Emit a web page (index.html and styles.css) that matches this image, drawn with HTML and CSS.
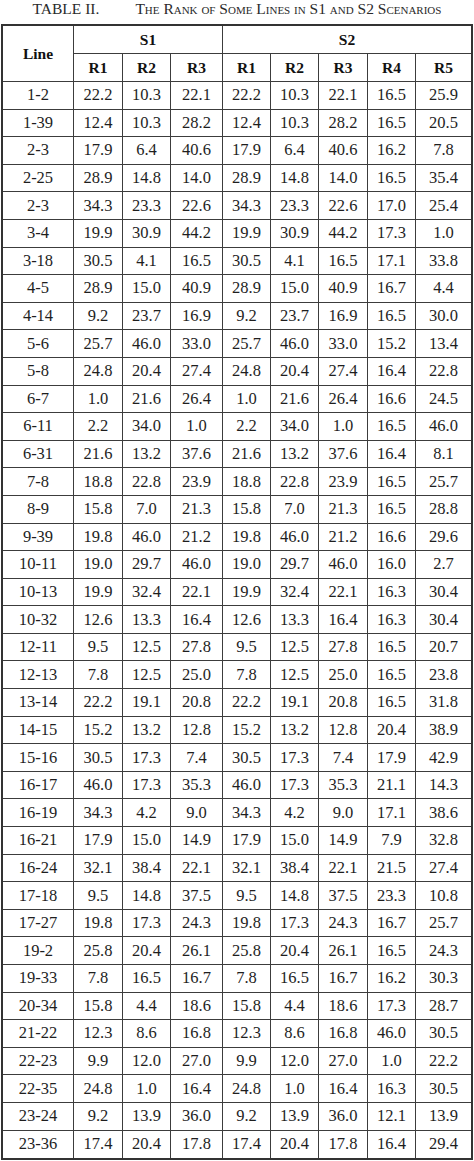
FILE: index.html
```html
<!DOCTYPE html>
<html>
<head>
<meta charset="utf-8">
<link rel="stylesheet" href="styles.css">
</head>
<body>
<div class="title"><span class="label">TABLE II.</span><span class="name">The Rank of Some Lines in S1 and S2 Scenarios</span></div>
<table class="rank">
<colgroup>
<col class="c-line"><col class="c49"><col class="c48"><col class="c52"><col class="c48"><col class="c48"><col class="c49"><col class="c48"><col class="c55">
</colgroup>
<thead>
<tr class="hrow"><th rowspan="2">Line</th><th colspan="3">S1</th><th colspan="5" class="last">S2</th></tr>
<tr class="hrow"><th>R1</th><th>R2</th><th>R3</th><th>R1</th><th>R2</th><th>R3</th><th>R4</th><th class="last">R5</th></tr>
</thead>
<tbody>
<tr><td>1-2</td><td>22.2</td><td>10.3</td><td>22.1</td><td>22.2</td><td>10.3</td><td>22.1</td><td>16.5</td><td>25.9</td></tr>
<tr><td>1-39</td><td>12.4</td><td>10.3</td><td>28.2</td><td>12.4</td><td>10.3</td><td>28.2</td><td>16.5</td><td>20.5</td></tr>
<tr><td>2-3</td><td>17.9</td><td>6.4</td><td>40.6</td><td>17.9</td><td>6.4</td><td>40.6</td><td>16.2</td><td>7.8</td></tr>
<tr><td>2-25</td><td>28.9</td><td>14.8</td><td>14.0</td><td>28.9</td><td>14.8</td><td>14.0</td><td>16.5</td><td>35.4</td></tr>
<tr><td>2-3</td><td>34.3</td><td>23.3</td><td>22.6</td><td>34.3</td><td>23.3</td><td>22.6</td><td>17.0</td><td>25.4</td></tr>
<tr><td>3-4</td><td>19.9</td><td>30.9</td><td>44.2</td><td>19.9</td><td>30.9</td><td>44.2</td><td>17.3</td><td>1.0</td></tr>
<tr><td>3-18</td><td>30.5</td><td>4.1</td><td>16.5</td><td>30.5</td><td>4.1</td><td>16.5</td><td>17.1</td><td>33.8</td></tr>
<tr><td>4-5</td><td>28.9</td><td>15.0</td><td>40.9</td><td>28.9</td><td>15.0</td><td>40.9</td><td>16.7</td><td>4.4</td></tr>
<tr><td>4-14</td><td>9.2</td><td>23.7</td><td>16.9</td><td>9.2</td><td>23.7</td><td>16.9</td><td>16.5</td><td>30.0</td></tr>
<tr><td>5-6</td><td>25.7</td><td>46.0</td><td>33.0</td><td>25.7</td><td>46.0</td><td>33.0</td><td>15.2</td><td>13.4</td></tr>
<tr><td>5-8</td><td>24.8</td><td>20.4</td><td>27.4</td><td>24.8</td><td>20.4</td><td>27.4</td><td>16.4</td><td>22.8</td></tr>
<tr><td>6-7</td><td>1.0</td><td>21.6</td><td>26.4</td><td>1.0</td><td>21.6</td><td>26.4</td><td>16.6</td><td>24.5</td></tr>
<tr><td>6-11</td><td>2.2</td><td>34.0</td><td>1.0</td><td>2.2</td><td>34.0</td><td>1.0</td><td>16.5</td><td>46.0</td></tr>
<tr><td>6-31</td><td>21.6</td><td>13.2</td><td>37.6</td><td>21.6</td><td>13.2</td><td>37.6</td><td>16.4</td><td>8.1</td></tr>
<tr><td>7-8</td><td>18.8</td><td>22.8</td><td>23.9</td><td>18.8</td><td>22.8</td><td>23.9</td><td>16.5</td><td>25.7</td></tr>
<tr><td>8-9</td><td>15.8</td><td>7.0</td><td>21.3</td><td>15.8</td><td>7.0</td><td>21.3</td><td>16.5</td><td>28.8</td></tr>
<tr><td>9-39</td><td>19.8</td><td>46.0</td><td>21.2</td><td>19.8</td><td>46.0</td><td>21.2</td><td>16.6</td><td>29.6</td></tr>
<tr><td>10-11</td><td>19.0</td><td>29.7</td><td>46.0</td><td>19.0</td><td>29.7</td><td>46.0</td><td>16.0</td><td>2.7</td></tr>
<tr><td>10-13</td><td>19.9</td><td>32.4</td><td>22.1</td><td>19.9</td><td>32.4</td><td>22.1</td><td>16.3</td><td>30.4</td></tr>
<tr><td>10-32</td><td>12.6</td><td>13.3</td><td>16.4</td><td>12.6</td><td>13.3</td><td>16.4</td><td>16.3</td><td>30.4</td></tr>
<tr><td>12-11</td><td>9.5</td><td>12.5</td><td>27.8</td><td>9.5</td><td>12.5</td><td>27.8</td><td>16.5</td><td>20.7</td></tr>
<tr><td>12-13</td><td>7.8</td><td>12.5</td><td>25.0</td><td>7.8</td><td>12.5</td><td>25.0</td><td>16.5</td><td>23.8</td></tr>
<tr><td>13-14</td><td>22.2</td><td>19.1</td><td>20.8</td><td>22.2</td><td>19.1</td><td>20.8</td><td>16.5</td><td>31.8</td></tr>
<tr><td>14-15</td><td>15.2</td><td>13.2</td><td>12.8</td><td>15.2</td><td>13.2</td><td>12.8</td><td>20.4</td><td>38.9</td></tr>
<tr><td>15-16</td><td>30.5</td><td>17.3</td><td>7.4</td><td>30.5</td><td>17.3</td><td>7.4</td><td>17.9</td><td>42.9</td></tr>
<tr><td>16-17</td><td>46.0</td><td>17.3</td><td>35.3</td><td>46.0</td><td>17.3</td><td>35.3</td><td>21.1</td><td>14.3</td></tr>
<tr><td>16-19</td><td>34.3</td><td>4.2</td><td>9.0</td><td>34.3</td><td>4.2</td><td>9.0</td><td>17.1</td><td>38.6</td></tr>
<tr><td>16-21</td><td>17.9</td><td>15.0</td><td>14.9</td><td>17.9</td><td>15.0</td><td>14.9</td><td>7.9</td><td>32.8</td></tr>
<tr><td>16-24</td><td>32.1</td><td>38.4</td><td>22.1</td><td>32.1</td><td>38.4</td><td>22.1</td><td>21.5</td><td>27.4</td></tr>
<tr><td>17-18</td><td>9.5</td><td>14.8</td><td>37.5</td><td>9.5</td><td>14.8</td><td>37.5</td><td>23.3</td><td>10.8</td></tr>
<tr><td>17-27</td><td>19.8</td><td>17.3</td><td>24.3</td><td>19.8</td><td>17.3</td><td>24.3</td><td>16.7</td><td>25.7</td></tr>
<tr><td>19-2</td><td>25.8</td><td>20.4</td><td>26.1</td><td>25.8</td><td>20.4</td><td>26.1</td><td>16.5</td><td>24.3</td></tr>
<tr><td>19-33</td><td>7.8</td><td>16.5</td><td>16.7</td><td>7.8</td><td>16.5</td><td>16.7</td><td>16.2</td><td>30.3</td></tr>
<tr><td>20-34</td><td>15.8</td><td>4.4</td><td>18.6</td><td>15.8</td><td>4.4</td><td>18.6</td><td>17.3</td><td>28.7</td></tr>
<tr><td>21-22</td><td>12.3</td><td>8.6</td><td>16.8</td><td>12.3</td><td>8.6</td><td>16.8</td><td>46.0</td><td>30.5</td></tr>
<tr><td>22-23</td><td>9.9</td><td>12.0</td><td>27.0</td><td>9.9</td><td>12.0</td><td>27.0</td><td>1.0</td><td>22.2</td></tr>
<tr><td>22-35</td><td>24.8</td><td>1.0</td><td>16.4</td><td>24.8</td><td>1.0</td><td>16.4</td><td>16.3</td><td>30.5</td></tr>
<tr><td>23-24</td><td>9.2</td><td>13.9</td><td>36.0</td><td>9.2</td><td>13.9</td><td>36.0</td><td>12.1</td><td>13.9</td></tr>
<tr><td>23-36</td><td>17.4</td><td>20.4</td><td>17.8</td><td>17.4</td><td>20.4</td><td>17.8</td><td>16.4</td><td>29.4</td></tr>
</tbody>
</table>
</body>
</html>
```

FILE: styles.css
```css
html, body {
  margin: 0;
  padding: 0;
  background: #fff;
}
body {
  font-family: "Liberation Serif", "Times New Roman", serif;
  color: #1a1a1a;
  width: 474px;
}
.title {
  height: 24px;
  font-size: 15.5px;
  line-height: 17px;
  text-align: center;
  white-space: nowrap;
  color: #2a2a2a;
}
.title .label {
  margin-right: 36px;
}
.title .name {
  font-variant: small-caps;
}
.rank {
  margin-left: 1px;
  width: 472px;
  table-layout: fixed;
  border-collapse: separate;
  border-spacing: 0;
  border: 2px solid #333;
}
.c-line { width: 71px; }
.c49 { width: 49px; }
.c48 { width: 48px; }
.c52 { width: 52px; }
.c55 { width: 55px; }
.rank th, .rank td {
  box-sizing: border-box;
  padding: 0;
  text-align: center;
  vertical-align: middle;
  border-right: 1px solid #3c3c3c;
  border-bottom: 1px solid #3c3c3c;
  white-space: nowrap;
}
.rank th {
  font-weight: bold;
  font-size: 15.5px;
  height: 28px;
  color: #111;
}
.rank td {
  font-size: 16.5px;
  height: 27.6px;
  color: #1e1e1e;
}
.rank th.last,
.rank td:last-child {
  border-right: none;
}
.rank tbody tr:last-child td {
  border-bottom: none;
}
```
